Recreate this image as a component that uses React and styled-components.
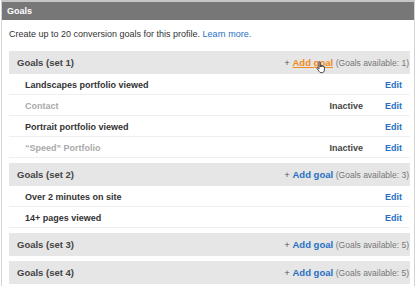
import React from "react"
import styled, { createGlobalStyle } from "styled-components"

const GlobalStyle = createGlobalStyle`
  body {
    margin: 0;
    background: #fff;
    font-family: "Liberation Sans", Arial, sans-serif;
  }
`

const Panel = styled.div`
  width: 412px;
  height: 286px;
  margin-left: 1px;
  border-left: 1px solid #d4d4d4;
  border-right: 1px solid #d4d4d4;
  border-top: 2px solid #c6c6c6;
  overflow: hidden;
`

const TitleBar = styled.div`
  height: 18px;
  background: #777;
  color: #fff;
  font-size: 9px;
  font-weight: bold;
  line-height: 18px;
  padding-left: 5px;
`

const Body = styled.div`
  padding: 0 4px 0 7px;
`

const Intro = styled.div`
  height: 31px;
  line-height: 28px;
  font-size: 9px;
  color: #333;
`

const Link = styled.a`
  color: #2770c4;
  text-decoration: none;
`

const Set = styled.div`
  margin-bottom: 5px;
`

const SetHeader = styled.div`
  height: 23px;
  background: #e6e6e6;
  display: flex;
  align-items: center;
  justify-content: space-between;
  padding: 0 1px 0 8px;
`

const SetTitle = styled.span`
  font-size: 9.5px;
  font-weight: bold;
  color: #444;
`

const AddGoal = styled.span`
  font-size: 9.5px;
  color: #555;
  position: relative;
`

const AddLink = styled.a`
  font-weight: bold;
  color: ${(p) => (p.$hover ? "#f08a22" : "#2770c4")};
  text-decoration: ${(p) => (p.$hover ? "underline" : "none")};
`

const Available = styled.span`
  font-size: 8.5px;
  color: #777;
`

const Cursor = styled.svg`
  position: absolute;
  left: 32px;
  top: 4px;
`

const Row = styled.div`
  height: 21px;
  display: flex;
  align-items: center;
  padding: 1px 8px 0 16px;
  border-bottom: 1px solid #efefef;
  font-size: 9px;
  font-weight: bold;
  box-sizing: border-box;
`

const Name = styled.span`
  flex: 1;
  color: ${(p) => (p.$inactive ? "#aaa" : "#333")};
`

const Status = styled.span`
  color: #444;
  margin-right: 22px;
`

const Edit = styled.a`
  color: #2770c4;
`

const sets = [
  {
    title: "Goals (set 1)",
    available: 1,
    hover: true,
    goals: [
      { name: "Landscapes portfolio viewed" },
      { name: "Contact", inactive: true },
      { name: "Portrait portfolio viewed" },
      { name: "\u201cSpeed\u201d Portfolio", inactive: true },
    ],
  },
  {
    title: "Goals (set 2)",
    available: 3,
    goals: [{ name: "Over 2 minutes on site" }, { name: "14+ pages viewed" }],
  },
  { title: "Goals (set 3)", available: 5, goals: [] },
  { title: "Goals (set 4)", available: 5, goals: [] },
]

const HandCursor = () => (
  <Cursor width="11" height="13" viewBox="0 0 11 13">
    <path
      d="M3 1.2c0-.7 1.2-.7 1.2 0V6l.2-1.4c.1-.7 1.2-.6 1.2.1v1l.2-.7c.2-.6 1.2-.5 1.2.2v.8l.2-.4c.3-.6 1.2-.4 1.2.3v3.2c0 1.5-1 2.6-2.5 2.6H5.2c-1 0-1.6-.5-2.1-1.3L1.2 7.6c-.4-.6.4-1.3 1-.7L3 7.8z"
      fill="#fff"
      stroke="#222"
      strokeWidth="0.8"
    />
  </Cursor>
)

export default function App() {
  return (
    <>
      <GlobalStyle />
      <Panel>
        <TitleBar>Goals</TitleBar>
        <Body>
          <Intro>
            Create up to 20 conversion goals for this profile. <Link>Learn more.</Link>
          </Intro>
          {sets.map((s) => (
            <Set key={s.title}>
              <SetHeader>
                <SetTitle>{s.title}</SetTitle>
                <AddGoal>
                  + <AddLink $hover={s.hover}>Add goal</AddLink>{" "}
                  <Available>(Goals available: {s.available})</Available>
                  {s.hover && <HandCursor />}
                </AddGoal>
              </SetHeader>
              {s.goals.map((g) => (
                <Row key={g.name}>
                  <Name $inactive={g.inactive}>{g.name}</Name>
                  {g.inactive && <Status>Inactive</Status>}
                  <Edit>Edit</Edit>
                </Row>
              ))}
            </Set>
          ))}
        </Body>
      </Panel>
    </>
  )
}
